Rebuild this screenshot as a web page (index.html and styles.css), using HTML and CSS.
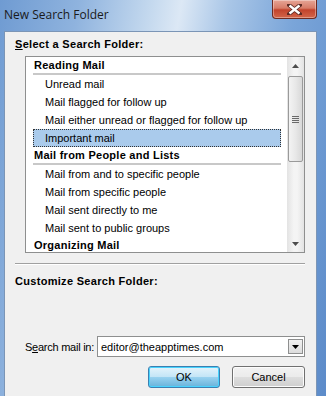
FILE: index.html
```html
<!DOCTYPE html>
<html lang="en">
<head>
    <meta charset="UTF-8">
    <title>New Search Folder</title>
    <link rel="stylesheet" href="styles.css">
</head>
<body>
    <div class="window">
        <!-- Title bar -->
        <div class="titlebar">
            <span class="title">New Search Folder</span>
            <div class="close-btn">
                <svg width="15" height="11" viewBox="0 0 15 11">
                    <path d="M2 1 L13 10 M13 1 L2 10" stroke="#5a2a24" stroke-width="4" stroke-linecap="round"/>
                    <path d="M2.5 1.5 L12.5 9.5 M12.5 1.5 L2.5 9.5" stroke="#fff" stroke-width="2.4"/>
                </svg>
            </div>
        </div>

        <!-- Dialog body -->
        <div class="client">
            <div class="group-label"><u>S</u>elect a Search Folder:</div>

            <div class="listbox">
                <div class="list-rows">
                    <div class="row header">Reading Mail</div>
                    <div class="row">Unread mail</div>
                    <div class="row">Mail flagged for follow up</div>
                    <div class="row">Mail either unread or flagged for follow up</div>
                    <div class="row selected">Important mail</div>
                    <div class="row header">Mail from People and Lists</div>
                    <div class="row">Mail from and to specific people</div>
                    <div class="row">Mail from specific people</div>
                    <div class="row">Mail sent directly to me</div>
                    <div class="row">Mail sent to public groups</div>
                    <div class="row header">Organizing Mail</div>
                </div>
                <div class="scrollbar">
                    <div class="sb-arrow">
                        <svg width="7" height="4" viewBox="0 0 7 4"><path d="M3.5 0 L7 4 L0 4 Z" fill="#4d4d4d"/></svg>
                    </div>
                    <div class="sb-track">
                        <div class="sb-thumb">
                            <div class="grip"></div>
                        </div>
                    </div>
                    <div class="sb-arrow">
                        <svg width="7" height="4" viewBox="0 0 7 4"><path d="M0 0 L7 0 L3.5 4 Z" fill="#4d4d4d"/></svg>
                    </div>
                </div>
            </div>

            <div class="separator"></div>

            <div class="group-label custom">Customize Search Folder:</div>

            <div class="spacer"></div>

            <div class="search-row">
                <span class="field-label">S<u>e</u>arch mail in:</span>
                <div class="combo">
                    <span class="combo-text">editor@theapptimes.com</span>
                    <div class="combo-btn">
                        <svg width="7" height="4" viewBox="0 0 7 4"><path d="M0 0 L7 0 L3.5 4 Z" fill="#000"/></svg>
                    </div>
                </div>
            </div>

            <div class="buttons">
                <button class="btn default">OK</button>
                <button class="btn">Cancel</button>
            </div>
        </div>
    </div>
</body>
</html>
```

FILE: styles.css
```css
/* Windows 7 style dialog */
html, body {
    margin: 0;
    padding: 0;
}

body {
    font-family: "Liberation Sans", Arial, sans-serif;
    font-size: 11px;
    color: #000;
}

.window {
    width: 326px;
    height: 396px;
    display: flex;
    flex-direction: column;
    background: linear-gradient(100deg, #6f9bd2 0%, #8fb3de 20%, #c3d8ee 38%, #dce8f5 46%, #a9c6e7 58%, #7aa5d9 75%, #5c8bc9 100%);
    overflow: hidden;
}

.titlebar {
    height: 31px;
    display: flex;
    justify-content: space-between;
    align-items: flex-start;
    flex-shrink: 0;
}

.title {
    font-family: "Open Sans", "Liberation Sans", sans-serif;
    font-size: 12px;
    margin: 6px 0 0 4px;
    color: #1a1a1a;
}

.close-btn {
    width: 43px;
    height: 18px;
    margin-right: 9px;
    border: 1px solid #6e2b22;
    border-top: none;
    border-radius: 0 0 4px 4px;
    background: linear-gradient(#e6a596 0%, #d77c68 45%, #c2432c 55%, #d3664a 100%);
    display: flex;
    align-items: center;
    justify-content: center;
    box-shadow: inset 0 0 0 1px rgba(255, 255, 255, 0.35);
}

.client {
    flex: 1;
    margin: 0 9px 0 4px;
    background: #f0f0f0;
    border: 1px solid #7b95b6;
    border-bottom: none;
    display: flex;
    flex-direction: column;
}

.group-label {
    font-weight: bold;
    letter-spacing: 0.3px;
    line-height: 14px;
    margin: 5px 0 0 10px;
}

.listbox {
    display: flex;
    width: 278px;
    height: 195px;
    margin: 5px 0 0 20px;
    border: 1px solid #8e8f8f;
    background: #fff;
    overflow: hidden;
}

.list-rows {
    flex: 1;
    padding: 0 6px 0 7px;
}

.row {
    height: 18px;
    line-height: 18px;
    padding-left: 12px;
    white-space: nowrap;
    box-sizing: border-box;
}

.row.header {
    font-weight: bold;
    letter-spacing: 0.25px;
    padding-left: 1px;
    border-bottom: 2px solid #c8c8c8;
    line-height: 16px;
}

.row.selected {
    background: #aacbec;
    border: 1px dotted #333;
    line-height: 16px;
    padding-left: 11px;
}

.scrollbar {
    width: 17px;
    display: flex;
    flex-direction: column;
    background: linear-gradient(90deg, #e3e3e3, #f4f4f4 40%, #f4f4f4 60%, #e3e3e3);
}

.sb-arrow {
    height: 17px;
    display: flex;
    align-items: center;
    justify-content: center;
    flex-shrink: 0;
}

.sb-track {
    flex: 1;
    padding-top: 2px;
}

.sb-thumb {
    height: 86px;
    margin: 0 1px;
    border: 1px solid #9a9a9a;
    border-radius: 2px;
    background: linear-gradient(90deg, #f3f3f3, #e8e8e8 50%, #d8d8d8);
    display: flex;
    align-items: center;
    justify-content: center;
    box-sizing: border-box;
}

.grip {
    width: 7px;
    height: 7px;
    background: repeating-linear-gradient(#6a6a6a 0 1px, transparent 1px 2px);
}

.separator {
    margin: 10px 0 0 10px;
    width: 290px;
    border-top: 1px solid #a0a0a0;
    border-bottom: 1px solid #fff;
}

.group-label.custom {
    margin-top: 9px;
}

.spacer {
    flex: 1;
}

.search-row {
    display: flex;
    align-items: center;
    padding-left: 20px;
}

.field-label {
    width: 72px;
    flex-shrink: 0;
    white-space: nowrap;
    letter-spacing: -0.25px;
}

.combo {
    width: 206px;
    height: 19px;
    flex-shrink: 0;
    border: 1px solid #8e8f8f;
    background: #fff;
    display: flex;
    align-items: center;
    justify-content: space-between;
}

.combo-text {
    padding-left: 3px;
}

.combo-btn {
    width: 15px;
    height: 15px;
    margin-right: 1px;
    border: 1px solid #8e8f8f;
    background: linear-gradient(#f2f2f2, #dcdcdc);
    display: flex;
    align-items: center;
    justify-content: center;
    box-sizing: border-box;
}

.buttons {
    display: flex;
    justify-content: flex-end;
    gap: 12px;
    margin: 9px 11px 8px 0;
}

.btn {
    width: 73px;
    height: 22px;
    font-family: inherit;
    font-size: 11px;
    border: 1px solid #707070;
    border-radius: 3px;
    background: linear-gradient(#f2f2f2 0%, #ebebeb 48%, #dddddd 52%, #cfcfcf 100%);
    box-shadow: inset 0 0 0 1px #fcfcfc;
    padding: 0;
}

.btn.default {
    width: 72px;
    border-color: #3c7fb1;
    background: linear-gradient(#e5f4fc 0%, #c4e5f6 48%, #98d1ef 52%, #68b3db 100%);
    box-shadow: inset 0 0 0 1px #48d3fd;
}
```
